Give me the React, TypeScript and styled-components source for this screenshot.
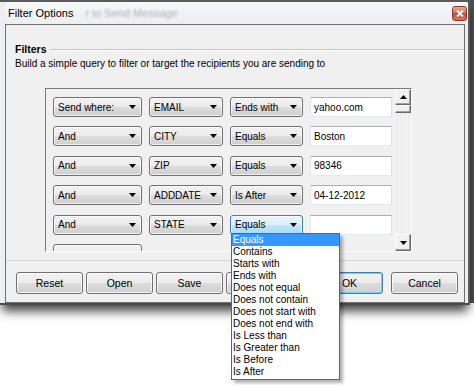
import React from 'react';
import styled, { createGlobalStyle, css } from 'styled-components';

const GlobalStyle = createGlobalStyle`
  html, body { margin: 0; padding: 0; background: #fff; }
  body { font-family: "Liberation Sans", Arial, sans-serif; color: #000; }
  * { box-sizing: border-box; }
`;

const Stage = styled.div`
  position: relative;
  width: 474px;
  height: 388px;
  overflow: hidden;
  background: linear-gradient(#4f4f4f, #4f4f4f) right top / 4px 303px no-repeat, #fff;
`;

const Window = styled.div`
  width: 470px;
  height: 305px;
  display: flex;
  flex-direction: column;
  padding: 0 3px 0 5px;
  background: #eceef1;
  border-top: 2px solid #5b5b5b;
  border-right: 2px solid #5b5b5b;
  border-bottom: 2px solid #4a4a4a;
  box-shadow: 0 8px 10px -2px rgba(0, 0, 0, 0.75);
`;

const TitleBar = styled.div`
  height: 22px;
  flex-shrink: 0;
  display: flex;
  align-items: center;
  margin-right: -3px;
  padding-left: 3px;
  background: linear-gradient(#f6f7f9, #eceef1);
`;

const Title = styled.span`
  font-size: 11px;
`;

const Ghost = styled.span`
  margin-left: 12px;
  font-size: 11px;
  color: rgba(40, 40, 40, 0.35);
  filter: blur(1.3px);
`;

const CloseButton = styled.div`
  margin-left: auto;
  margin-right: 1px;
  width: 15px;
  height: 15px;
  display: flex;
  align-items: center;
  justify-content: center;
  border: 1px solid #8c3a2c;
  border-radius: 3px;
  background: linear-gradient(#e8a89c, #d0705f 50%, #c04a3b 50%, #d27a68);
`;

const Client = styled.div`
  flex: 1;
  display: flex;
  flex-direction: column;
  border: 1px solid #707070;
  background: #f0f0f0;
`;

const GroupHeader = styled.div`
  margin-top: 17px;
  height: 14px;
  display: flex;
  align-items: center;
  gap: 3px;
  padding-left: 9px;
`;

const GroupLabel = styled.span`
  font-size: 10.5px;
  font-weight: bold;
`;

const GroupLine = styled.div`
  flex: 1;
  height: 1px;
  background: #c4c4c4;
  box-shadow: 0 1px 0 #fff;
`;

const Description = styled.div`
  margin: 1px 0 0 9px;
  height: 14px;
  line-height: 14px;
  font-size: 10px;
`;

const Panel = styled.div`
  margin: 17px 0 0 39px;
  width: 367px;
  height: 164px;
  flex-shrink: 0;
  display: flex;
  border: 1px solid;
  border-color: #7a7a7a #fff #fff #7a7a7a;
`;

const Rows = styled.div`
  flex: 1;
  display: flex;
  flex-direction: column;
  gap: 9.4px;
  padding: 8px 0 0 7px;
  overflow: hidden;
`;

const Row = styled.div`
  display: grid;
  grid-template-columns: 89px 74px 73px 82px;
  column-gap: 7px;
  height: 20px;
  flex-shrink: 0;
`;

const Combo = styled.div<{ $focused?: boolean }>`
  height: 20px;
  display: flex;
  align-items: center;
  justify-content: space-between;
  padding: 0 5px 0 4px;
  font-size: 10px;
  border: 1px solid #707070;
  border-radius: 3px;
  background: linear-gradient(#f2f2f2, #ebebeb 50%, #dddddd 50%, #cfcfcf);
  box-shadow: inset 0 0 0 1px rgba(255, 255, 255, 0.7);
  ${(p) =>
    p.$focused &&
    css`
      border-color: #3c7fb1;
      background: linear-gradient(#eaf6fd, #d9f0fc 50%, #bee6fd 50%, #a7d9f5);
    `}
`;

const TextBox = styled.div`
  height: 20px;
  display: flex;
  align-items: center;
  padding-left: 3px;
  font-size: 10px;
  background: #fff;
  border: 1px solid;
  border-color: #abadb3 #dbdfe6 #e3e9ef #e2e3ea;
`;

const ScrollBar = styled.div`
  width: 16px;
  display: flex;
  flex-direction: column;
  background: repeating-linear-gradient(90deg, #f4f4f4 0 1px, #eaeaea 1px 2px);
`;

const ScrollPiece = styled.div<{ $h: number }>`
  height: ${(p) => p.$h}px;
  flex-shrink: 0;
  display: flex;
  align-items: center;
  justify-content: center;
  background: #f0f0f0;
  border: 1px solid;
  border-color: #fff #696969 #696969 #fff;
  box-shadow: inset -1px -1px 0 #a0a0a0;
`;

const ScrollTrack = styled.div`
  flex: 1;
`;

const Footer = styled.div`
  margin-top: 8px;
  flex: 1;
  display: flex;
  justify-content: space-between;
  align-items: flex-start;
  padding: 11px 6px 0 10px;
  border-top: 1px solid #d5d5d5;
`;

const ButtonGroup = styled.div<{ $gap: number }>`
  display: flex;
  gap: ${(p) => p.$gap}px;
`;

const Button = styled.div<{ $primary?: boolean }>`
  width: 67px;
  height: 22px;
  display: flex;
  align-items: center;
  justify-content: center;
  font-size: 10.5px;
  border: 1px solid #707070;
  border-radius: 3px;
  background: linear-gradient(#f2f2f2, #ebebeb 50%, #dddddd 50%, #cfcfcf);
  box-shadow: inset 0 0 0 1px rgba(255, 255, 255, 0.8);
  ${(p) =>
    p.$primary &&
    css`
      border-color: #3c7fb1;
      box-shadow: inset 0 0 0 1px #6fd0f8;
    `}
`;

const DropList = styled.div`
  position: absolute;
  left: 231px;
  top: 233px;
  width: 109px;
  display: flex;
  flex-direction: column;
  padding: 0 0 1px;
  background: #fff;
  border: 1px solid #646464;
  box-shadow: 3px 3px 3px rgba(0, 0, 0, 0.3);
`;

const DropItem = styled.div<{ $selected?: boolean }>`
  height: 12px;
  line-height: 12px;
  padding-left: 1px;
  font-size: 10px;
  white-space: nowrap;
  ${(p) =>
    p.$selected &&
    css`
      background: #3399ff;
      color: #fff;
    `}
`;

const Arrow = ({ up }: { up?: boolean }) => (
  <svg width="7" height="4" viewBox="0 0 7 4">
    <polygon points={up ? '0,4 7,4 3.5,0' : '0,0 7,0 3.5,4'} fill="#000" />
  </svg>
);

const CloseX = () => (
  <svg width="8" height="7" viewBox="0 0 8 7">
    <path d="M1 0.5 L7 6.5 M7 0.5 L1 6.5" stroke="#fff" strokeWidth="1.8" />
  </svg>
);

const rows = [
  ['Send where:', 'EMAIL', 'Ends with', 'yahoo.com'],
  ['And', 'CITY', 'Equals', 'Boston'],
  ['And', 'ZIP', 'Equals', '98346'],
  ['And', 'ADDDATE', 'Is After', '04-12-2012'],
  ['And', 'STATE', 'Equals', ''],
];

const operators = [
  'Equals',
  'Contains',
  'Starts with',
  'Ends with',
  'Does not equal',
  'Does not contain',
  'Does not start with',
  'Does not end with',
  'Is Less than',
  'Is Greater than',
  'Is Before',
  'Is After',
];

export default function App() {
  return (
    <Stage>
      <GlobalStyle />
      <Window>
        <TitleBar>
          <Title>Filter Options</Title>
          <Ghost>r to Send Message</Ghost>
          <CloseButton>
            <CloseX />
          </CloseButton>
        </TitleBar>
        <Client>
          <GroupHeader>
            <GroupLabel>Filters</GroupLabel>
            <GroupLine />
          </GroupHeader>
          <Description>Build a simple query to filter or target the recipients you are sending to</Description>
          <Panel>
            <Rows>
              {rows.map((r, i) => (
                <Row key={i}>
                  <Combo>
                    {r[0]}
                    <Arrow />
                  </Combo>
                  <Combo>
                    {r[1]}
                    <Arrow />
                  </Combo>
                  <Combo $focused={i === 4}>
                    {r[2]}
                    <Arrow />
                  </Combo>
                  <TextBox>{r[3]}</TextBox>
                </Row>
              ))}
              <Row>
                <Combo />
              </Row>
            </Rows>
            <ScrollBar>
              <ScrollPiece $h={16}>
                <Arrow up />
              </ScrollPiece>
              <ScrollPiece $h={8} />
              <ScrollTrack />
              <ScrollPiece $h={17}>
                <Arrow />
              </ScrollPiece>
            </ScrollBar>
          </Panel>
          <Footer>
            <ButtonGroup $gap={3}>
              <Button>Reset</Button>
              <Button>Open</Button>
              <Button>Save</Button>
              <Button />
            </ButtonGroup>
            <ButtonGroup $gap={8}>
              <Button $primary>OK</Button>
              <Button>Cancel</Button>
            </ButtonGroup>
          </Footer>
        </Client>
      </Window>
      <DropList>
        {operators.map((op, i) => (
          <DropItem key={op} $selected={i === 0}>
            {op}
          </DropItem>
        ))}
      </DropList>
    </Stage>
  );
}
